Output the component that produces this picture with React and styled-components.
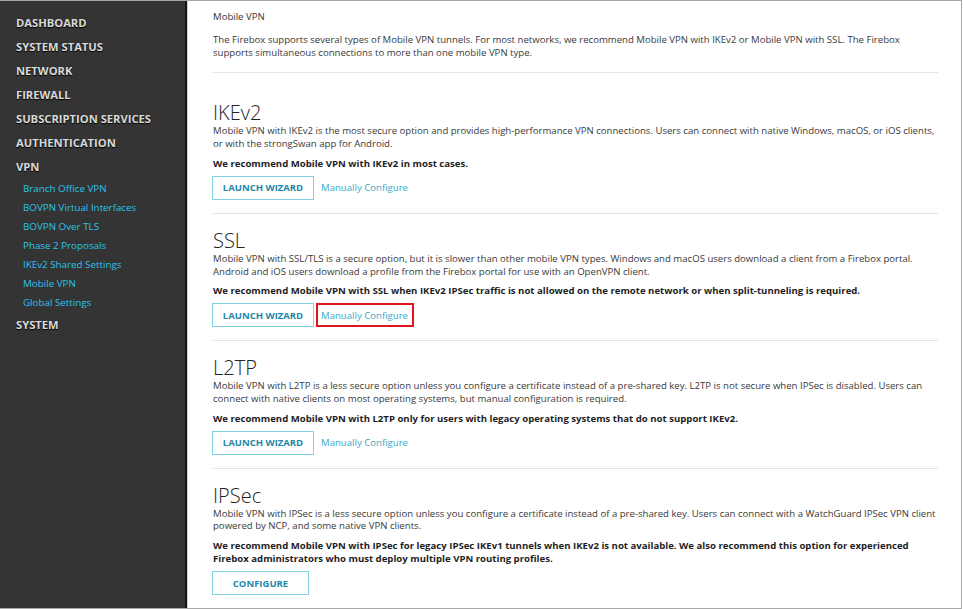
import React from "react";
import styled, { createGlobalStyle } from "styled-components";

const Global = createGlobalStyle`
  html, body { margin: 0; padding: 0; background: #fff; }
  body { font-family: "Open Sans", "Liberation Sans", sans-serif; }
  * { box-sizing: border-box; }
`;

const Frame = styled.div`
  width: 962px;
  height: 609px;
  display: flex;
  border-top: 1px solid #a8a8a8;
  border-right: 1px solid #a8a8a8;
  border-bottom: 1px solid #a8a8a8;
  overflow: hidden;
  background: #fff;
`;

const Sidebar = styled.nav`
  width: 187px;
  flex: none;
  background: #343434;
  border-right: 2px solid #141414;
  padding-top: 10px;
  display: flex;
  flex-direction: column;
`;

const NavItem = styled.div`
  padding-left: 16px;
  height: 24px;
  line-height: 24px;
  font-size: 11.2px;
  font-weight: 700;
  color: #dadada;
  text-transform: uppercase;
  text-shadow: 0 1px 1px #000;
  margin-top: ${(p) => (p.$gap ? "1px" : "0")};
  white-space: nowrap;
`;

const SubItem = styled.div`
  padding-left: 23px;
  height: 19px;
  line-height: 19px;
  font-size: 9.8px;
  font-weight: 500;
  color: #2ac2ee;
  white-space: nowrap;
`;

const Main = styled.main`
  flex: 1;
  border-left: 1px solid #d4d4d4;
  padding: 0 23px 0 25px;
`;

const PageTitle = styled.div`
  font-size: 9.6px;
  line-height: 13px;
  color: #333;
  padding-top: 9px;
`;

const Text = styled.p`
  margin: 0;
  font-size: 9.6px;
  line-height: 12.7px;
  color: #3a3a3a;
`;

const Intro = styled.div`
  border-bottom: 1px solid #e4e4e4;
  padding-bottom: 13px;
  & > p { margin-top: 11px; }
`;

const Section = styled.section`
  padding-top: ${(p) => (p.$first ? "28px" : "15px")};
  padding-bottom: 13px;
  border-bottom: ${(p) => (p.$last ? "none" : "1px solid #e4e4e4")};
`;

const Heading = styled.h2`
  margin: 0;
  font-size: 20px;
  line-height: 24px;
  font-weight: 300;
  color: #222;
`;

const Strong = styled.p`
  margin: 6px 0 0;
  font-size: 9.6px;
  line-height: 13px;
  font-weight: 700;
  color: #1e1e1e;
`;

const Actions = styled.div`
  margin-top: 6px;
  margin-left: -1px;
  display: flex;
  align-items: center;
  gap: 2px;
`;

const Button = styled.button`
  height: 24px;
  width: ${(p) => p.$w}px;
  border: 1px solid #80d3e6;
  background: #fff;
  color: #1d87a9;
  font-family: "Open Sans", "Liberation Sans", sans-serif;
  font-size: 9.5px;
  font-weight: 700;
  text-transform: uppercase;
  padding: 0;
`;

const LinkBtn = styled.span`
  display: inline-flex;
  align-items: center;
  height: 24px;
  padding: 0 4px 0 3px;
  font-size: 9.6px;
  color: #3aa9ca;
  border: 2px solid ${(p) => (p.$hl ? "#e0141b" : "transparent")};
`;

const sections = [
  {
    title: "IKEv2",
    text: "Mobile VPN with IKEv2 is the most secure option and provides high-performance VPN connections. Users can connect with native Windows, macOS, or iOS clients, or with the strongSwan app for Android.",
    strong: "We recommend Mobile VPN with IKEv2 in most cases.",
    button: "Launch Wizard",
    link: true,
  },
  {
    title: "SSL",
    text: "Mobile VPN with SSL/TLS is a secure option, but it is slower than other mobile VPN types. Windows and macOS users download a client from a Firebox portal. Android and iOS users download a profile from the Firebox portal for use with an OpenVPN client.",
    strong: "We recommend Mobile VPN with SSL when IKEv2 IPSec traffic is not allowed on the remote network or when split-tunneling is required.",
    button: "Launch Wizard",
    link: true,
    hl: true,
  },
  {
    title: "L2TP",
    text: "Mobile VPN with L2TP is a less secure option unless you configure a certificate instead of a pre-shared key. L2TP is not secure when IPSec is disabled. Users can connect with native clients on most operating systems, but manual configuration is required.",
    strong: "We recommend Mobile VPN with L2TP only for users with legacy operating systems that do not support IKEv2.",
    button: "Launch Wizard",
    link: true,
  },
  {
    title: "IPSec",
    text: "Mobile VPN with IPSec is a less secure option unless you configure a certificate instead of a pre-shared key. Users can connect with a WatchGuard IPSec VPN client powered by NCP, and some native VPN clients.",
    strong: "We recommend Mobile VPN with IPSec for legacy IPSec IKEv1 tunnels when IKEv2 is not available. We also recommend this option for experienced Firebox administrators who must deploy multiple VPN routing profiles.",
    button: "Configure",
    w: 97,
  },
];

const navMain = ["Dashboard", "System Status", "Network", "Firewall", "Subscription Services", "Authentication", "VPN"];
const navSub = ["Branch Office VPN", "BOVPN Virtual Interfaces", "BOVPN Over TLS", "Phase 2 Proposals", "IKEv2 Shared Settings", "Mobile VPN", "Global Settings"];

export default function App() {
  return (
    <>
      <Global />
      <Frame>
        <Sidebar>
          {navMain.map((n) => (
            <NavItem key={n}>{n}</NavItem>
          ))}
          {navSub.map((n) => (
            <SubItem key={n}>{n}</SubItem>
          ))}
          <NavItem $gap>System</NavItem>
        </Sidebar>
        <Main>
          <Intro>
            <PageTitle>Mobile VPN</PageTitle>
            <Text>
              The Firebox supports several types of Mobile VPN tunnels. For most networks, we recommend Mobile VPN with IKEv2 or Mobile VPN with SSL. The Firebox supports simultaneous connections to more than one mobile VPN type.
            </Text>
          </Intro>
          {sections.map((s, i) => (
            <Section key={s.title} $first={i === 0} $last={i === sections.length - 1}>
              <Heading>{s.title}</Heading>
              <Text>{s.text}</Text>
              <Strong>{s.strong}</Strong>
              <Actions>
                <Button $w={s.w || 102}>{s.button}</Button>
                {s.link && <LinkBtn $hl={s.hl}>Manually Configure</LinkBtn>}
              </Actions>
            </Section>
          ))}
        </Main>
      </Frame>
    </>
  );
}
